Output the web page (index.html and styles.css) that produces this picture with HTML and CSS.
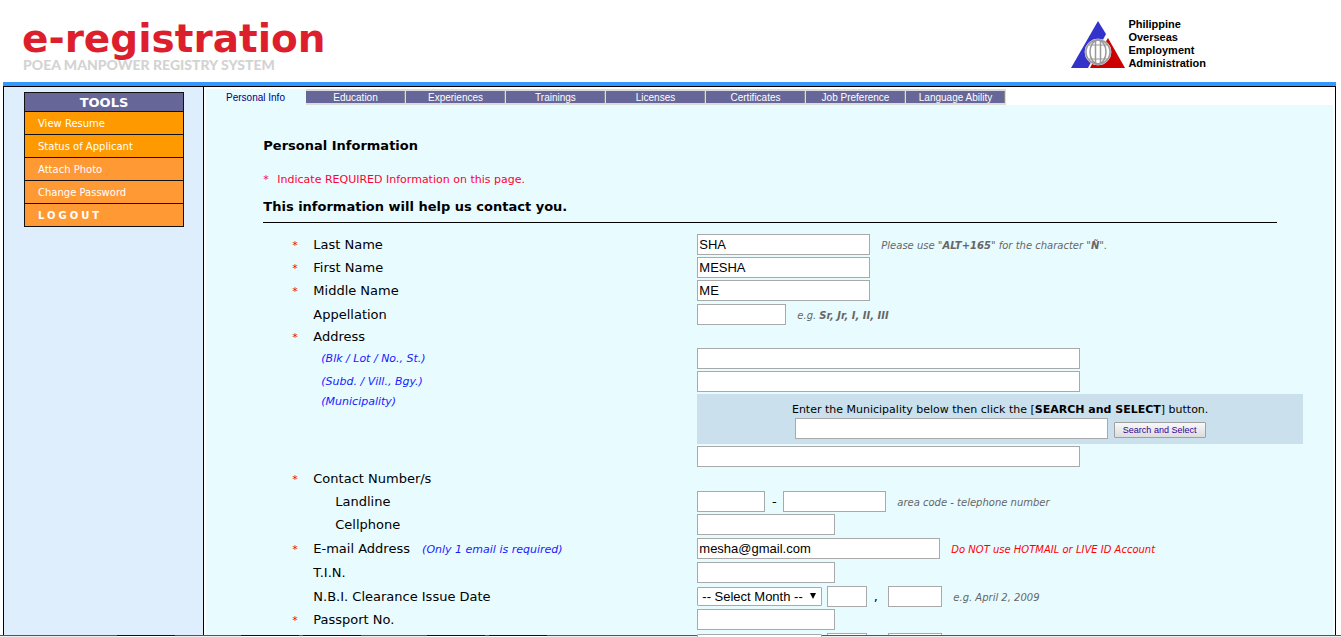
FILE: index.html
```html
<!DOCTYPE html>
<html lang="en">
<head>
    <meta charset="UTF-8">
    <meta name="viewport" content="width=device-width, initial-scale=1.0">
    <title>e-registration - POEA Manpower Registry System</title>
    <link rel="stylesheet" href="styles.css">
</head>
<body>
    <header class="header">
        <div class="brand">
            <h1>e-registration</h1>
            <p>POEA MANPOWER REGISTRY SYSTEM</p>
        </div>
        <div class="agency">
            <svg width="54" height="48" viewBox="0 0 54 48">
                <path d="M27 0 L35 13 L17 47 L0 47 Z" fill="#3333cc"/>
                <path d="M37 17 L54 47 L19 47 L21 43 Z" fill="#cc0000"/>
                <circle cx="27" cy="31" r="13" fill="#fff" stroke="#ccc" stroke-width="1"/>
                <g fill="none" stroke="#999" stroke-width="1.500">
                    <circle cx="27" cy="31" r="12"/>
                    <ellipse cx="27" cy="31" rx="8" ry="12"/>
                    <path d="M24.500 19V43M29.500 19V43"/>
                    <path d="M18 24H36M18 38H36" stroke-width="1"/>
                </g>
            </svg>
            <p>Philippine<br>Overseas<br>Employment<br>Administration</p>
        </div>
    </header>

    <div class="page">
        <aside class="sidebar">
            <nav class="tools">
                <h2>TOOLS</h2>
                <a href="#" class="amber">View Resume</a>
                <a href="#" class="amber">Status of Applicant</a>
                <a href="#">Attach Photo</a>
                <a href="#">Change Password</a>
                <a href="#" class="logout">LOGOUT</a>
            </nav>
        </aside>

        <main class="main">
            <nav class="tabs">
                <a href="#" class="tab active">Personal Info</a>
                <a href="#" class="tab">Education</a>
                <a href="#" class="tab">Experiences</a>
                <a href="#" class="tab">Trainings</a>
                <a href="#" class="tab">Licenses</a>
                <a href="#" class="tab">Certificates</a>
                <a href="#" class="tab">Job Preference</a>
                <a href="#" class="tab">Language Ability</a>
            </nav>

            <div class="content">
                <div class="intro">
                    <h2>Personal Information</h2>
                    <p class="required"><span>*</span> Indicate REQUIRED Information on this page.</p>
                    <h2>This information will help us contact you.</h2>
                </div>

                <form class="form">
                    <div class="row">
                        <span class="star">*</span>
                        <label for="lastname">Last Name</label>
                        <div class="field">
                            <input type="text" id="lastname" class="w-name" value="SHA">
                            <span class="hint">Please use "<b>ALT+165</b>" for the character "<b>Ñ</b>".</span>
                        </div>
                    </div>
                    <div class="row">
                        <span class="star">*</span>
                        <label for="firstname">First Name</label>
                        <div class="field"><input type="text" id="firstname" class="w-name" value="MESHA"></div>
                    </div>
                    <div class="row tall">
                        <span class="star">*</span>
                        <label for="middlename">Middle Name</label>
                        <div class="field"><input type="text" id="middlename" class="w-name" value="ME"></div>
                    </div>
                    <div class="row">
                        <label for="appellation">Appellation</label>
                        <div class="field">
                            <input type="text" id="appellation" class="w-appellation">
                            <span class="hint">e.g. <b>Sr, Jr, I, II, III</b></span>
                        </div>
                    </div>
                    <div class="row short">
                        <span class="star">*</span>
                        <span class="label">Address</span>
                    </div>
                    <div class="row">
                        <label for="street" class="note sub">(Blk / Lot / No., St.)</label>
                        <div class="field"><input type="text" id="street" class="w-address"></div>
                    </div>
                    <div class="row">
                        <label for="village" class="note sub">(Subd. / Vill., Bgy.)</label>
                        <div class="field"><input type="text" id="village" class="w-address"></div>
                    </div>
                    <div class="row search-row">
                        <label for="search" class="note sub">(Municipality)</label>
                        <div class="municipality">
                            <p>Enter the Municipality below then click the [<b>SEARCH and SELECT</b>] button.</p>
                            <div class="search">
                                <input type="text" id="search" class="w-search">
                                <button type="button">Search and Select</button>
                            </div>
                        </div>
                    </div>
                    <div class="row">
                        <div class="field"><input type="text" class="w-address" aria-label="Municipality"></div>
                    </div>
                    <div class="row medium">
                        <span class="star">*</span>
                        <span class="label">Contact Number/s</span>
                    </div>
                    <div class="row">
                        <label for="areacode" class="indent">Landline</label>
                        <div class="field">
                            <input type="text" id="areacode" class="w-area">
                            <span class="sep">-</span>
                            <input type="text" class="w-phone" aria-label="Telephone number">
                            <span class="hint">area code - telephone number</span>
                        </div>
                    </div>
                    <div class="row tall">
                        <label for="cellphone" class="indent">Cellphone</label>
                        <div class="field"><input type="text" id="cellphone" class="w-number"></div>
                    </div>
                    <div class="row tall">
                        <span class="star">*</span>
                        <label for="email">E-mail Address <span class="note beside">(Only 1 email is required)</span></label>
                        <div class="field">
                            <input type="text" id="email" class="w-email" value="mesha@gmail.com">
                            <span class="hint warn">Do NOT use HOTMAIL or LIVE ID Account</span>
                        </div>
                    </div>
                    <div class="row tall">
                        <label for="tin">T.I.N.</label>
                        <div class="field"><input type="text" id="tin" class="w-number"></div>
                    </div>
                    <div class="row">
                        <label for="nbimonth">N.B.I. Clearance Issue Date</label>
                        <div class="field date">
                            <div class="select">
                                <select id="nbimonth"><option>-- Select Month --</option></select>
                            </div>
                            <input type="text" class="w-day" aria-label="Day">
                            <span class="sep">,</span>
                            <input type="text" class="w-year" aria-label="Year">
                            <span class="hint">e.g. April 2, 2009</span>
                        </div>
                    </div>
                    <div class="row tall">
                        <span class="star">*</span>
                        <label for="passport">Passport No.</label>
                        <div class="field"><input type="text" id="passport" class="w-number"></div>
                    </div>
                    <div class="row">
                        <div class="field date">
                            <div class="select">
                                <select aria-label="Month"></select>
                            </div>
                            <input type="text" class="w-day" aria-label="Day">
                            <span class="sep"></span>
                            <input type="text" class="w-year" aria-label="Year">
                        </div>
                    </div>
                </form>
            </div>
        </main>
    </div>

    <!-- top edge of the docked bar -->
    <footer class="dock">
        <i></i>
        <i class="gap"></i>
        <i></i>
        <i></i>
        <i class="gap"></i>
        <i></i>
        <i></i>
    </footer>
</body>
</html>
```
FILE: styles.css
```css
* {
    margin: 0;
    padding: 0;
    box-sizing: border-box;
}

body {
    display: flex;
    flex-direction: column;
    height: 100vh;
    overflow: hidden;
    background: #fff;
    color: #000;
    font-family: Verdana, "DejaVu Sans", sans-serif;
    font-size: 13px;
}

a {
    text-decoration: none;
}

/* Header */
.header {
    display: flex;
    justify-content: space-between;
    flex: none;
    height: 82px;
    padding: 18px 135px 0 22px;
}

.brand h1 {
    padding-top: 2px;
    color: #dd1f2d;
    font-size: 39px;
    line-height: 38px;
}

.brand p {
    color: #d3d3d3;
    font-family: Lato, sans-serif;
    font-size: 14px;
    font-weight: 900;
    line-height: 14px;
    padding-left: 1px;
}

.agency {
    display: flex;
    gap: 3px;
    font: bold 11px/13px "Liberation Sans", Arial, sans-serif;
}

.agency svg {
    margin-top: 3px;
}

/* Page frame */
.page {
    display: flex;
    flex: 1;
    min-height: 0;
    margin: 0 5px 0 3px;
    border-top: 4px solid #3399ff;
}

.sidebar {
    flex: none;
    width: 201px;
    padding: 5px 19px 0 20px;
    background: #deeefc;
    border: 1px solid #000;
    border-bottom: 0;
}

.tools {
    background: #ff9933;
    border: 1px solid #111;
}

.tools h2 {
    padding-top: 1px;
    background: #666699;
    color: #fff;
    font-size: 13px;
    line-height: 17px;
    text-align: center;
}

.tools a {
    display: block;
    padding: 1px 0 0 13px;
    border-top: 1px solid #111;
    color: #fff;
    font-size: 10px;
    line-height: 21px;
}

.tools .amber {
    background: #ff9900;
}

.tools .logout {
    font-weight: bold;
    letter-spacing: 3px;
}

.main {
    display: flex;
    flex-direction: column;
    flex: 1;
    min-width: 0;
    padding: 2px 2px 0;
    border: 1px solid #000;
    border-width: 1px 1px 0 0;
}

/* Tabs */
.tabs {
    display: flex;
    flex: none;
}

.tab {
    width: 100px;
    height: 16px;
    background: #666699;
    border: 2px solid #dcdcdc;
    border-width: 2px 1px 2px 0;
    box-shadow: inset -1px 0 #888;
    color: #fff;
    font: 10px/13px "Liberation Sans", Arial, sans-serif;
    text-align: center;
}

.tab.active {
    background: #e8fbff;
    border-color: #e8fbff;
    box-shadow: none;
    color: #000080;
}

.content {
    flex: 1;
    min-height: 0;
    padding-left: 1px;
    background: #e8fbff;
}

.intro {
    width: 90%;
    margin-left: 5%;
    padding-top: 31px;
    border-bottom: 1px solid #000;
}

.intro h2 {
    font-size: 13px;
    line-height: 20px;
}

.intro h2:last-child {
    padding-bottom: 5px;
}

.required {
    padding: 14px 0 7px;
    color: #ff0033;
    font-size: 11px;
    line-height: 20px;
}

.required span {
    margin-right: 5px;
}

/* Form */
.form {
    margin: 10px 30px 0 5%;
}

.row {
    display: grid;
    grid-template-columns: 50px 384px 1fr;
    min-height: 23px;
    padding-top: 1px;
    line-height: 21px;
}

.row.tall {
    min-height: 24px;
}

.row.medium {
    min-height: 22px;
    line-height: 19px;
}

.row.short {
    min-height: 21px;
    line-height: 19px;
}

.row.search-row {
    line-height: 15px;
}

.star {
    grid-column: 1;
    padding: 1px 0 0 29px;
    color: #ff0000;
    font-size: 11px;
}

.row > label,
.label {
    grid-column: 2;
}

.field,
.municipality {
    grid-column: 3;
}

.star,
.row > label,
.label,
.field {
    height: 21px;
}

.short .label,
.short .star {
    height: 20px;
}

.field {
    display: flex;
    align-items: flex-start;
    white-space: nowrap;
}

.indent {
    padding-left: 22px;
}

.note {
    color: #1a1aff;
    font-size: 11px;
    font-style: italic;
}

.beside {
    margin-left: 8px;
}

.sub {
    padding-left: 8px;
}

.hint {
    margin-left: 11px;
    color: #666;
    font-size: 10px;
    font-style: italic;
    line-height: 23px;
    height: 21px;
}

.warn {
    color: #ff0000;
}

.sep {
    width: 18px;
    text-align: center;
}

.date .sep {
    width: 21px;
    padding-right: 4px;
}

input,
select {
    height: 21px;
    padding: 0 1px;
    background: #fff;
    border: 1px solid #a9a9a9;
    color: #000;
    font: 13px "Liberation Sans", Arial, sans-serif;
}

.w-name { width: 173px; }
.w-appellation { width: 89px; }
.w-address { width: 383px; }
.w-search { width: 313px; }
.w-area { width: 68px; }
.w-phone { width: 103px; }
.w-number { width: 138px; }
.w-email { width: 243px; }
.w-day { width: 40px; }
.w-year { width: 54px; }

.select {
    position: relative;
    width: 125px;
    height: 21px;
    margin-right: 5px;
    padding-top: 1px;
}

.select select {
    display: block;
    width: 100%;
    height: 19px;
    padding-left: 4px;
    border-radius: 1px;
    appearance: none;
}

.select::after {
    content: "";
    position: absolute;
    top: 7px;
    right: 6px;
    border: 3px solid transparent;
    border-top: 6px solid #000;
    border-bottom: 0;
}

.municipality {
    height: 50px;
    margin-bottom: 1px;
    padding-top: 8px;
    background: #cae0ed;
    font-size: 11px;
    line-height: 16px;
    text-align: center;
}

.search {
    display: flex;
    justify-content: center;
    gap: 6px;
}

.search button {
    width: 92px;
    height: 16px;
    margin-top: 4px;
    background: linear-gradient(#f8f8f8, #dcdcdc);
    border: 1px solid #a0a0a0;
    border-radius: 1px;
    color: #330099;
    font: 9px "Liberation Sans", Arial, sans-serif;
}

/* Docked bar along the bottom */
.dock {
    display: flex;
    flex: none;
    gap: 4px;
    height: 2px;
    padding-left: 117px;
    background: linear-gradient(#555 50%, #eee 50%);
}

.dock i {
    width: 58px;
    background: linear-gradient(#111 50%, #fff 50%);
}

.dock .gap {
    background: none;
}
```
